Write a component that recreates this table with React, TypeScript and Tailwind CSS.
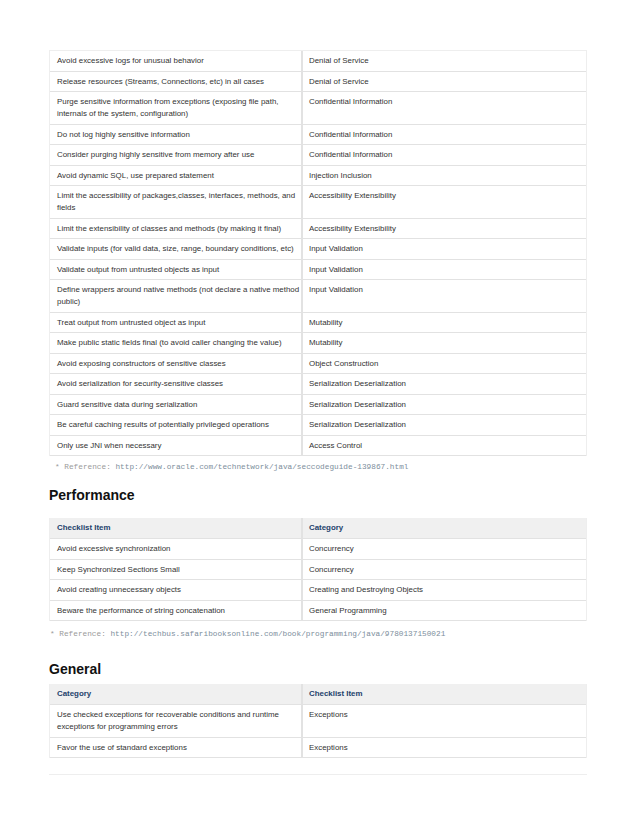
const security: [string, string][] = [
  ["Avoid excessive logs for unusual behavior", "Denial of Service"],
  ["Release resources (Streams, Connections, etc) in all cases", "Denial of Service"],
  ["Purge sensitive information from exceptions (exposing file path, internals of the system, configuration)", "Confidential Information"],
  ["Do not log highly sensitive information", "Confidential Information"],
  ["Consider purging highly sensitive from memory after use", "Confidential Information"],
  ["Avoid dynamic SQL, use prepared statement", "Injection Inclusion"],
  ["Limit the accessibility of packages,classes, interfaces, methods, and fields", "Accessibility Extensibility"],
  ["Limit the extensibility of classes and methods (by making it final)", "Accessibility Extensibility"],
  ["Validate inputs (for valid data, size, range, boundary conditions, etc)", "Input Validation"],
  ["Validate output from untrusted objects as input", "Input Validation"],
  ["Define wrappers around native methods (not declare a native method public)", "Input Validation"],
  ["Treat output from untrusted object as input", "Mutability"],
  ["Make public static fields final (to avoid caller changing the value)", "Mutability"],
  ["Avoid exposing constructors of sensitive classes", "Object Construction"],
  ["Avoid serialization for security-sensitive classes", "Serialization Deserialization"],
  ["Guard sensitive data during serialization", "Serialization Deserialization"],
  ["Be careful caching results of potentially privileged operations", "Serialization Deserialization"],
  ["Only use JNI when necessary", "Access Control"],
];

const performance: [string, string][] = [
  ["Avoid excessive synchronization", "Concurrency"],
  ["Keep Synchronized Sections Small", "Concurrency"],
  ["Avoid creating unnecessary objects", "Creating and Destroying Objects"],
  ["Beware the performance of string concatenation", "General Programming"],
];

const general: [string, string][] = [
  ["Use checked exceptions for recoverable conditions and runtime exceptions for programming errors", "Exceptions"],
  ["Favor the use of standard exceptions", "Exceptions"],
];

function Table({ head, rows, top }: { head?: [string, string]; rows: [string, string][]; top?: boolean }) {
  return (
    <div className={`w-[538px] border-x border-[#eeeeee] ${top ? "border-t" : ""}`}>
      {head && (
        <div className="grid grid-cols-[251px_287px] bg-[#f0f0f0] border-b border-[#e2e2e2]">
          <div className="px-[7px] py-[4px] leading-[12px] font-bold text-[#23426b]">{head[0]}</div>
          <div className="px-[6px] py-[4px] leading-[12px] font-bold text-[#23426b] border-l-2 border-[#e2e2e2]">{head[1]}</div>
        </div>
      )}
      {rows.map(([a, b]) => (
        <div key={a} className="grid grid-cols-[251px_287px] border-b border-[#e2e2e2]">
          <div className="pl-[7px] pr-0 pt-[4px] pb-[3.5px] leading-[12px]">{a}</div>
          <div className="px-[6px] pt-[4px] pb-[3.5px] leading-[12px] border-l-2 border-[#e2e2e2]">{b}</div>
        </div>
      ))}
    </div>
  );
}

function Ref({ url, indent }: { url: string; indent: string }) {
  return (
    <div className={`${indent} font-['Liberation_Mono',monospace] text-[7.75px] leading-[12px] text-[#9a9a9a]`}>
      * Reference: <span className="text-[#7d8e9c]">{url}</span>
    </div>
  );
}

function Heading({ children }: { children: string }) {
  return <h2 className="text-[14px] leading-[16px] font-bold text-[#111111]">{children}</h2>;
}

export default function App() {
  return (
    <div className="w-[638px] h-[826px] bg-white pl-[49px] pt-[50px] font-['Liberation_Sans',Arial,sans-serif] text-[7.9px] text-[#333333]">
      <Table rows={security} top />
      <Ref url="http://www.oracle.com/technetwork/java/seccodeguide-139867.html" indent="pl-[6px] mt-[5px]" />
      <div className="mt-[14px]">
        <Heading>Performance</Heading>
      </div>
      <div className="mt-[15px]">
        <Table head={["Checklist Item", "Category"]} rows={performance} />
      </div>
      <Ref url="http://techbus.safaribooksonline.com/book/programming/java/9780137150021" indent="pl-[1px] mt-[7px]" />
      <div className="mt-[21px]">
        <Heading>General</Heading>
      </div>
      <div className="mt-[7px]">
        <Table head={["Category", "Checklist Item"]} rows={general} />
      </div>
      <div className="w-[538px] mt-[16px] border-t border-[#eeeeee]" />
    </div>
  );
}
